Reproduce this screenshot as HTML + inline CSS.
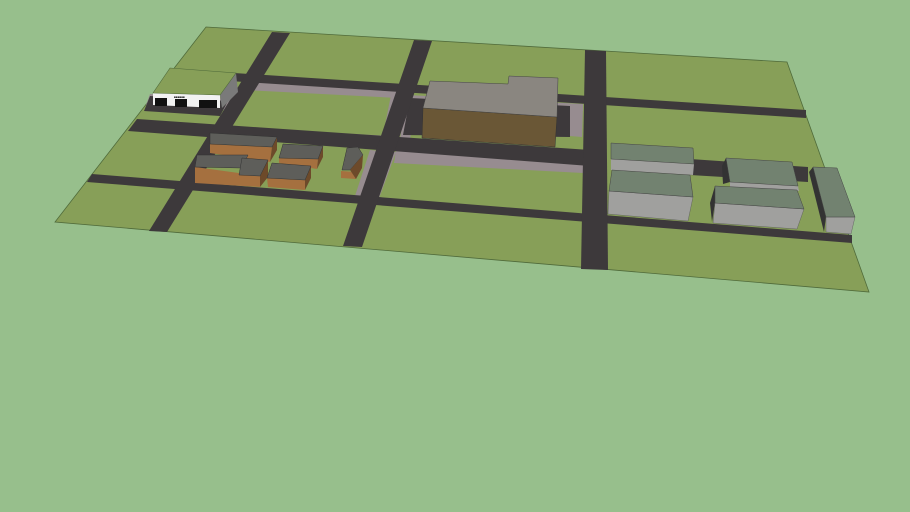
<!DOCTYPE html>
<html><head><meta charset="utf-8"><style>
html,body{margin:0;padding:0;background:#97bf8c;overflow:hidden}
svg{display:block}
</style></head><body>
<svg width="910" height="512" viewBox="0 0 910 512" xmlns="http://www.w3.org/2000/svg">
<rect width="910" height="512" fill="#97bf8c"/>
<!-- ground plate -->
<polygon points="206,27 787,62 869,292 55,222" fill="#879f58" stroke="#4f6a3a" stroke-width="0.8"/>
<!-- sidewalks -->
<polygon points="250,81 400,89 398,98 244,90" fill="#978c90"/>
<polygon points="244,90 252,90 230,130 223,129" fill="#978c90"/>
<polygon points="226,127 390,136 389,141 225,133" fill="#978c90"/>
<polygon points="392,90 400,90 389,141 382,140" fill="#978c90"/>
<polygon points="408,95 418,96 410,139 400,138" fill="#978c90"/>
<polygon points="408,95 583,104 583,111 408,103" fill="#978c90"/>
<polygon points="570,104 583,104 582,137 570,136" fill="#978c90"/>
<polygon points="396,150 583,160 583,173 394,163" fill="#978c90"/>
<polygon points="370,150 380,151 363,200 354,199" fill="#978c90"/>
<polygon points="383,151 396,152 378,201 368,200" fill="#978c90"/>
<polygon points="150,94 233,99 226,110 146,105" fill="#978c90"/>
<!-- roads -->
<polygon points="234,73 806,110 806,118 229,81" fill="#3d393b"/>
<polygon points="150,96 228,101 220,116 144,111" fill="#3d393b"/>
<polygon points="410,98 570,106 570,137 403,135" fill="#3d393b"/>
<polygon points="137,119 590,150 590,166 128,131" fill="#3d393b"/>
<polygon points="690,159 808,167 808,182 690,175" fill="#3d393b"/>
<polygon points="92,174 852,235 852,243 87,182" fill="#3d393b"/>
<polygon points="272,32 290,33 167,232 149,231" fill="#3d393b"/>
<polygon points="414,40 432,41 362,247 343,246" fill="#3d393b"/>
<polygon points="585,50 606,51 608,270 581,269" fill="#3d393b"/>
<!-- white building -->
<polygon points="153,93 220,95 220,108 153,105" fill="#f2f2f2"/>
<rect x="155" y="98" width="12" height="8" fill="#111"/>
<rect x="175" y="99" width="12" height="8" fill="#111"/>
<rect x="199" y="100" width="18" height="8" fill="#111"/>
<text x="174" y="98" font-family="Liberation Sans, sans-serif" font-size="3" fill="#222">■■■■■■</text>
<polygon points="220,95 236,73 238,92 222,108" fill="#7a7a7a"/>
<polygon points="170,68 236,73 220,95 153,93" fill="#879f58" stroke="#4f6a3a" stroke-width="0.6"/>
<!-- big brown building -->
<polygon points="423,108 557,117 555,147 422,138" fill="#6a5736" stroke="#333" stroke-width="0.5"/>
<polygon points="430,81 508,84 509,76 558,78 557,117 423,108" fill="#8a8680" stroke="#444" stroke-width="0.5"/>
<!-- left brown buildings -->
<polygon points="210,144 272,147 270,162 210,153" fill="#a5703f"/>
<polygon points="272,147 277,137 277,150 270,162" fill="#6d4a2a"/>
<polygon points="210,133 277,137 272,147 210,144" fill="#5e5e5a" stroke="#333" stroke-width="0.5"/>
<polygon points="195,167 260,176 260,187 195,183" fill="#a5703f"/>
<polygon points="260,176 268,160 268,177 260,187" fill="#6d4a2a"/>
<polygon points="197,155 248,155 242,168 195,167" fill="#5e5e5a" stroke="#333" stroke-width="0.5"/>
<polygon points="242,158 268,160 260,176 239,175" fill="#5e5e5a" stroke="#333" stroke-width="0.5"/>
<polygon points="279,158 318,159 317,169 279,163" fill="#a5703f"/>
<polygon points="318,159 323,146 323,157 317,169" fill="#6d4a2a"/>
<polygon points="283,144 323,146 318,159 279,158" fill="#5e5e5a" stroke="#333" stroke-width="0.5"/>
<polygon points="267,178 305,180 305,190 268,187" fill="#a5703f"/>
<polygon points="305,180 311,166 311,178 305,190" fill="#6d4a2a"/>
<polygon points="272,163 311,166 305,180 267,178" fill="#5e5e5a" stroke="#333" stroke-width="0.5"/>
<polygon points="341,171 355,172 356,179 341,178" fill="#a5703f"/>
<polygon points="347,148 358,147 363,155 350,170 342,170" fill="#5e5e5a" stroke="#333" stroke-width="0.5"/>
<polygon points="350,170 363,155 362,168 356,179" fill="#6d4a2a"/>
<!-- grey-green buildings -->
<polygon points="611,159 694,164 693,175 611,170" fill="#a0a09e"/>
<polygon points="611,143 693,148 694,164 611,159" fill="#728270" stroke="#444" stroke-width="0.5"/>
<polygon points="609,191 693,197 688,221 608,214" fill="#a0a09e" stroke="#555" stroke-width="0.4"/>
<polygon points="612,170 690,175 693,197 609,191" fill="#728270" stroke="#444" stroke-width="0.5"/>
<polygon points="726,158 722,166 723,184 730,182" fill="#333"/>
<polygon points="730,182 798,186 799,191 730,187" fill="#a0a09e"/>
<polygon points="726,158 792,162 798,186 730,182" fill="#728270" stroke="#444" stroke-width="0.5"/>
<polygon points="715,186 710,203 712,222 715,203" fill="#333"/>
<polygon points="715,203 804,209 797,229 713,223" fill="#a0a09e" stroke="#555" stroke-width="0.4"/>
<polygon points="715,186 797,190 804,209 715,203" fill="#728270" stroke="#444" stroke-width="0.5"/>
<polygon points="813,167 809,172 824,232 826,217" fill="#333"/>
<polygon points="826,217 855,217 851,234 826,232" fill="#a0a09e" stroke="#555" stroke-width="0.4"/>
<polygon points="813,167 837,168 855,217 826,217" fill="#728270" stroke="#444" stroke-width="0.5"/>
</svg>
</body></html>
